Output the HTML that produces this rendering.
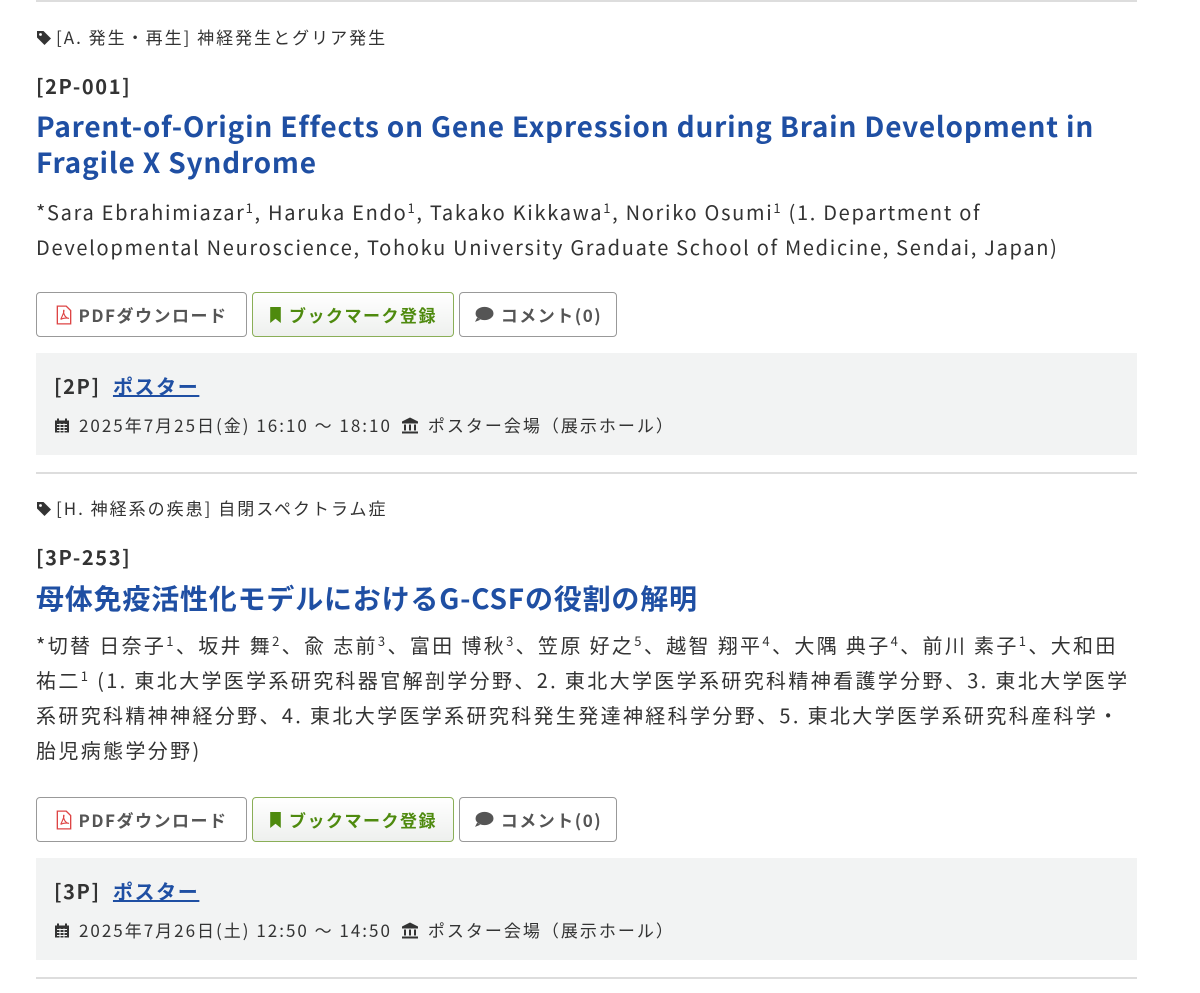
<!DOCTYPE html>
<html><head><meta charset="utf-8"><style>
*{margin:0;padding:0;box-sizing:border-box}
body{width:1200px;height:993px;background:#fff;font-family:"Noto Sans CJK JP","Liberation Sans",sans-serif;color:#333;position:relative;overflow:hidden}
.a{position:absolute;white-space:nowrap}
.hr{position:absolute;left:36px;width:1101px;height:2px;background:#ddd}
.tag{font-size:17px;color:#333;line-height:20px;letter-spacing:2px}
.code{font-size:20px;font-weight:bold;line-height:26px;color:#333;letter-spacing:1.6px}
.title{font-size:28px;font-weight:bold;color:#1f4fa3;line-height:36px;letter-spacing:0.8px}
.auth{font-size:20px;line-height:35px;color:#333;letter-spacing:1.7px}
.auth.j{letter-spacing:2.35px}
.auth sup{font-size:13px;vertical-align:7px;line-height:0}
.btn{position:absolute;height:45px;border:1px solid #999;border-radius:4px;background:#fff;font-size:17px;font-weight:bold;color:#555;display:flex;align-items:center;justify-content:center;gap:7px;letter-spacing:1.5px}
.btn.g{border-color:#8aae57;color:#4e8a0e;background:linear-gradient(#fff,#eef0ee)}
.box{position:absolute;left:36px;width:1101px;height:102px;background:#f2f3f3}
.sess{font-size:20px;font-weight:bold;line-height:26px;color:#333;letter-spacing:1.6px}
.sess a{color:#1f4fa3;text-decoration:underline}
.dt{font-size:17px;line-height:20px;color:#333;display:flex;align-items:center;gap:9px;letter-spacing:2px}
</style></head><body>
<div class="hr" style="top:0"></div>

<div class="a tag" style="left:36px;top:27px"><svg width="16" height="16" viewBox="0 0 16 16" style="vertical-align:-2px;margin-right:4px"><path d="M1 1h6.5l7.5 7.5-6.5 6.5L1 7.5z" fill="#333"/><circle cx="4.5" cy="4.5" r="1.4" fill="#fff"/></svg>[A. 発生・再生] 神経発生とグリア発生</div>
<div class="a code" style="left:36px;top:73px">[2P-001]</div>
<div class="a title" style="left:36px;top:108px">Parent-of-Origin Effects on Gene Expression during Brain Development in<br>Fragile X Syndrome</div>
<div class="a auth" style="left:36px;top:194px">*Sara Ebrahimiazar<sup>1</sup>, Haruka Endo<sup>1</sup>, Takako Kikkawa<sup>1</sup>, Noriko Osumi<sup>1</sup> (1. Department of<br>Developmental Neuroscience, Tohoku University Graduate School of Medicine, Sendai, Japan)</div>

<div class="btn" style="left:36px;top:292px;width:211px"><svg width="16" height="20" viewBox="0 0 14 18"><path d="M1 1h8l4 4v12H1z" fill="#fff" stroke="#d44" stroke-width="1.2"/><path d="M4 13c2-4 3-7 3-8s-1 0 0 3 3 4 4 4-4-1-7 1" fill="none" stroke="#d44" stroke-width="1"/></svg>PDFダウンロード</div>
<div class="btn g" style="left:252px;top:292px;width:202px"><svg width="13" height="18" viewBox="0 0 12 17"><path d="M1 1h10v15l-5-4-5 4z" fill="#4e8a0e"/></svg>ブックマーク登録</div>
<div class="btn" style="left:459px;top:292px;width:158px"><svg width="20" height="17" viewBox="0 0 19 16"><ellipse cx="10" cy="7" rx="8.5" ry="6.3" fill="#555"/><path d="M3 11l-2 4 5-2z" fill="#555"/></svg>コメント(0)</div>

<div class="box" style="top:353px"></div>
<div class="a sess" style="left:54px;top:373px">[2P]&nbsp; <a>ポスター</a></div>
<div class="a dt" style="left:54px;top:415px"><svg width="16" height="17" viewBox="0 0 16 16"><path d="M1 3h14v12H1z" fill="#333"/><path d="M4 1v3M12 1v3" stroke="#333" stroke-width="2"/><path d="M3 7h10M3 10h10M3 13h10M6 6v9M10 6v9" stroke="#f2f3f3" stroke-width="1"/></svg><span>2025年7月25日(金) 16:10 ～ 18:10</span><svg width="18" height="17" viewBox="0 0 18 16"><path d="M9 0L1 4v2h16V4z" fill="#333"/><path d="M3 7h2v6H3zM8 7h2v6H8zM13 7h2v6h-2zM1 14h16v2H1z" fill="#333"/></svg><span>ポスター会場（展示ホール）</span></div>

<div class="hr" style="top:472px"></div>

<div class="a tag" style="left:36px;top:498px"><svg width="16" height="16" viewBox="0 0 16 16" style="vertical-align:-2px;margin-right:4px"><path d="M1 1h6.5l7.5 7.5-6.5 6.5L1 7.5z" fill="#333"/><circle cx="4.5" cy="4.5" r="1.4" fill="#fff"/></svg>[H. 神経系の疾患] 自閉スペクトラム症</div>
<div class="a code" style="left:36px;top:544px">[3P-253]</div>
<div class="a title" style="left:36px;top:580px">母体免疫活性化モデルにおけるG-CSFの役割の解明</div>
<div class="a auth j" style="left:36px;top:627px">*切替 日奈子<sup>1</sup>、坂井 舞<sup>2</sup>、兪 志前<sup>3</sup>、富田 博秋<sup>3</sup>、笠原 好之<sup>5</sup>、越智 翔平<sup>4</sup>、大隅 典子<sup>4</sup>、前川 素子<sup>1</sup>、大和田<br>祐二<sup>1</sup> (1. 東北大学医学系研究科器官解剖学分野、2. 東北大学医学系研究科精神看護学分野、3. 東北大学医学<br>系研究科精神神経分野、4. 東北大学医学系研究科発生発達神経科学分野、5. 東北大学医学系研究科産科学・<br>胎児病態学分野)</div>

<div class="btn" style="left:36px;top:797px;width:211px"><svg width="16" height="20" viewBox="0 0 14 18"><path d="M1 1h8l4 4v12H1z" fill="#fff" stroke="#d44" stroke-width="1.2"/><path d="M4 13c2-4 3-7 3-8s-1 0 0 3 3 4 4 4-4-1-7 1" fill="none" stroke="#d44" stroke-width="1"/></svg>PDFダウンロード</div>
<div class="btn g" style="left:252px;top:797px;width:202px"><svg width="13" height="18" viewBox="0 0 12 17"><path d="M1 1h10v15l-5-4-5 4z" fill="#4e8a0e"/></svg>ブックマーク登録</div>
<div class="btn" style="left:459px;top:797px;width:158px"><svg width="20" height="17" viewBox="0 0 19 16"><ellipse cx="10" cy="7" rx="8.5" ry="6.3" fill="#555"/><path d="M3 11l-2 4 5-2z" fill="#555"/></svg>コメント(0)</div>

<div class="box" style="top:858px"></div>
<div class="a sess" style="left:54px;top:878px">[3P]&nbsp; <a>ポスター</a></div>
<div class="a dt" style="left:54px;top:920px"><svg width="16" height="17" viewBox="0 0 16 16"><path d="M1 3h14v12H1z" fill="#333"/><path d="M4 1v3M12 1v3" stroke="#333" stroke-width="2"/><path d="M3 7h10M3 10h10M3 13h10M6 6v9M10 6v9" stroke="#f2f3f3" stroke-width="1"/></svg><span>2025年7月26日(土) 12:50 ～ 14:50</span><svg width="18" height="17" viewBox="0 0 18 16"><path d="M9 0L1 4v2h16V4z" fill="#333"/><path d="M3 7h2v6H3zM8 7h2v6H8zM13 7h2v6h-2zM1 14h16v2H1z" fill="#333"/></svg><span>ポスター会場（展示ホール）</span></div>

<div class="hr" style="top:977px"></div>
</body></html>
